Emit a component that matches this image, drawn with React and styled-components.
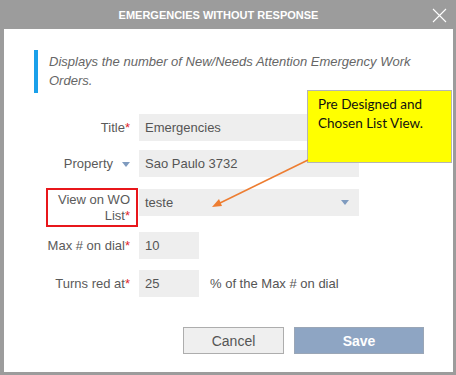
import React from "react";
import styled, { createGlobalStyle } from "styled-components";

const GlobalStyle = createGlobalStyle`
  html, body {
    margin: 0;
    padding: 0;
    background: #9c9c9c;
    font-family: "Liberation Sans", Arial, sans-serif;
  }
`;

const Frame = styled("div")`
  width: 456px;
  height: 375px;
  background: #9c9c9c;
  display: flex;
  flex-direction: column;
  position: relative;
  overflow: hidden;
`;

const Header = styled("div")`
  height: 29px;
  flex-shrink: 0;
  display: flex;
  align-items: center;
  justify-content: center;
  padding-right: 19px;
  position: relative;
  color: #ffffff;
  font-size: 11px;
  font-weight: 700;
`;

const Close = styled("button")`
  position: absolute;
  right: 9px;
  top: 8px;
  width: 15px;
  height: 15px;
  padding: 0;
  border: 0;
  background: none;
  display: flex;
`;

const Body = styled("div")`
  flex: 1;
  margin: 0 3px 3px 4px;
  background: #ffffff;
  padding: 21px 29px 0 30px;
  display: flex;
  flex-direction: column;
`;

const Description = styled("div")`
  border-left: 4px solid #1aa0ea;
  padding: 2px 0 3px 11px;
  margin-right: 10px;
  color: #666666;
  font-size: 13px;
  font-style: italic;
  line-height: 19px;
`;

const Form = styled("div")`
  display: flex;
  flex-direction: column;
  margin-top: 21px;
  margin-left: -30px;
`;

const Row = styled("div")`
  display: flex;
  align-items: center;
  margin-top: ${(p) => p.$gap || 0}px;
`;

const LabelCell = styled("div")`
  width: 134px;
  flex-shrink: 0;
  display: flex;
  justify-content: flex-end;
  align-items: center;
`;

const Label = styled("div")`
  color: #5a5a5a;
  font-size: 13px;
  line-height: 16px;
  text-align: right;
  padding-right: ${(p) => (p.$highlight ? 6 : 8)}px;
  ${(p) =>
    p.$highlight &&
    `
    width: 92px;
    box-sizing: border-box;
    border: 2px solid #e8161b;
    padding-top: 2px;
    padding-bottom: 1px;
  `}
`;

const Line = styled("div")`
  white-space: nowrap;
`;

const Req = styled("span")`
  color: #e0262c;
`;

const Caret = styled("span")`
  display: inline-block;
  width: 0;
  height: 0;
  border-left: 4px solid transparent;
  border-right: 4px solid transparent;
  border-top: 5px solid #7f9bbf;
  margin-left: 9px;
  vertical-align: middle;
`;

const Input = styled("div")`
  width: ${(p) => p.$width}px;
  height: 27px;
  box-sizing: border-box;
  margin-left: 1px;
  background: #eeeeee;
  color: #555555;
  font-size: 13px;
  display: flex;
  align-items: center;
  justify-content: space-between;
  padding: 0 10px 0 6px;
  align-self: flex-start;
  margin-top: ${(p) => p.$offset || 0}px;
`;

const Suffix = styled("span")`
  color: #555555;
  font-size: 13px;
  margin-left: 11px;
`;

const Buttons = styled("div")`
  display: flex;
  justify-content: flex-end;
  gap: 10px;
  margin-top: 30px;
`;

const Button = styled("button")`
  width: ${(p) => p.$width}px;
  height: 27px;
  box-sizing: border-box;
  border: 1px solid ${(p) => (p.$primary ? "#9aa6b6" : "#adadad")};
  background: ${(p) => (p.$primary ? "#8ea5c3" : "#efefef")};
  color: ${(p) => (p.$primary ? "#ffffff" : "#555555")};
  font-family: "Liberation Sans", Arial, sans-serif;
  font-size: 14px;
  font-weight: ${(p) => (p.$primary ? 700 : 400)};
  padding: 0;
`;

const Callout = styled("div")`
  position: absolute;
  left: 307px;
  top: 90px;
  width: 145px;
  height: 73px;
  box-sizing: border-box;
  background: #ffff00;
  border: 1px solid #b5b5b5;
  padding: 4px 8px 0 10px;
  color: #111111;
  font-family: Lato, "Liberation Sans", sans-serif;
  font-size: 13.5px;
  line-height: 19px;
`;

const Arrow = styled("svg")`
  position: absolute;
  left: 0;
  top: 0;
  pointer-events: none;
`;

export default function App() {
  return (
    <>
      <GlobalStyle />
      <Frame>
        <Header>
          EMERGENCIES WITHOUT RESPONSE
          <Close aria-label="close">
            <svg width="15" height="15" viewBox="0 0 15 15">
              <path d="M1 1 L14 14 M14 1 L1 14" stroke="#ffffff" strokeWidth="1.1" fill="none" />
            </svg>
          </Close>
        </Header>
        <Body>
          <Description>
            Displays the number of New/Needs Attention Emergency Work Orders.
          </Description>
          <Form>
            <Row>
              <LabelCell>
                <Label>
                  Title<Req>*</Req>
                </Label>
              </LabelCell>
              <Input $width={220}>Emergencies</Input>
            </Row>
            <Row $gap={9}>
              <LabelCell>
                <Label>
                  Property<Caret />
                </Label>
              </LabelCell>
              <Input $width={220}>Sao Paulo 3732</Input>
            </Row>
            <Row $gap={11}>
              <LabelCell>
                <Label $highlight>
                  <Line>View on WO</Line>
                  <Line>
                    List<Req>*</Req>
                  </Line>
                </Label>
              </LabelCell>
              <Input $width={220} $offset={1}>
                teste
                <Caret />
              </Input>
            </Row>
            <Row $gap={5}>
              <LabelCell>
                <Label>
                  Max # on dial<Req>*</Req>
                </Label>
              </LabelCell>
              <Input $width={60}>10</Input>
            </Row>
            <Row $gap={11}>
              <LabelCell>
                <Label>
                  Turns red at<Req>*</Req>
                </Label>
              </LabelCell>
              <Input $width={60}>25</Input>
              <Suffix>% of the Max # on dial</Suffix>
            </Row>
          </Form>
          <Buttons>
            <Button $width={101}>Cancel</Button>
            <Button $width={130} $primary>
              Save
            </Button>
          </Buttons>
        </Body>
        <Callout>
          Pre Designed and
          <br />
          Chosen List View.
        </Callout>
        <Arrow width="456" height="375" viewBox="0 0 456 375">
          <line x1="308" y1="160" x2="220" y2="203" stroke="#ed7d31" strokeWidth="1.5" />
          <path d="M212 207 L219 199 L222 206 Z" fill="#ed7d31" />
        </Arrow>
      </Frame>
    </>
  );
}
